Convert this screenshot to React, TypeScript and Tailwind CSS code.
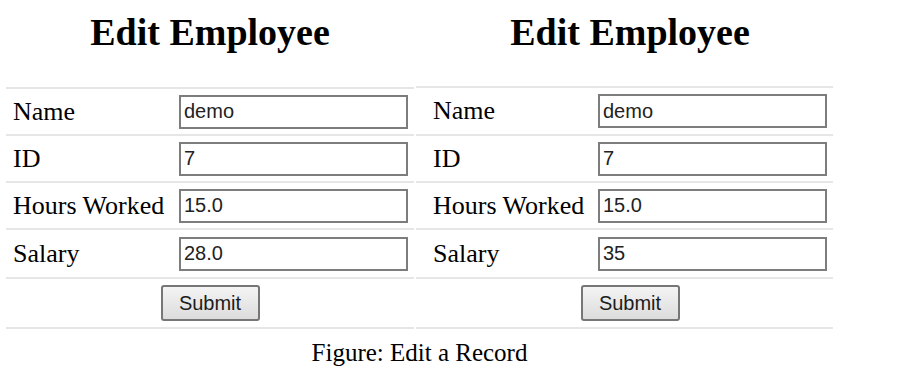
const serif = "font-['Liberation_Serif','Times_New_Roman',serif]";
const sans = "font-['Liberation_Sans',Arial,sans-serif]";

type Row = { label: string; value: string; h: string };

const EmployeeForm = ({
    rows,
    width,
    labelWidth,
    labelPad,
    shift,
    titleHeight,
}: {
    rows: Row[];
    width: string;
    labelWidth: string;
    labelPad: string;
    shift: string;
    titleHeight: string;
}) => {
    return (
        <div className={`${width} shrink-0`}>
            <div className={`${titleHeight} pt-[12px] ${shift}`}>
                <h2 className={`${serif} text-center text-[38px] leading-[40px] font-bold text-black`}>
                    Edit Employee
                </h2>
            </div>
            <div className="border-t-2 border-[#e6e6e6]">
                {rows.map((row) => (
                    <div
                        key={row.label}
                        className={`flex items-center ${row.h} border-b-2 border-[#e6e6e6]`}
                    >
                        <span
                            className={`${labelWidth} ${labelPad} ${serif} text-[26px] leading-[30px] text-black whitespace-nowrap`}
                        >
                            {row.label}
                        </span>
                        <input
                            type="text"
                            defaultValue={row.value}
                            className={`w-[229px] h-[34px] border-2 border-[#7d7d7d] bg-white pl-[3px] ${sans} text-[20px] text-[#222] outline-none`}
                        />
                    </div>
                ))}
                <div className={`flex h-[50px] items-center justify-center border-b-2 border-[#e6e6e6] ${shift}`}>
                    <button
                        type="button"
                        className={`w-[99px] h-[36px] rounded-[3px] border-2 border-[#767676] bg-gradient-to-b from-[#f4f4f4] to-[#dcdcdc] ${sans} text-[20px] text-[#1c1c1c]`}
                    >
                        Submit
                    </button>
                </div>
            </div>
        </div>
    );
};

const App = () => {
    return (
        <div className="w-[898px] h-[384px] bg-white pl-[6px]">
            <div className="flex w-[827px] gap-[2px]">
                <EmployeeForm
                    width="w-[408px]"
                    labelWidth="w-[173px]"
                    labelPad="pl-[7px]"
                    shift=""
                    titleHeight="h-[87px]"
                    rows={[
                        { label: "Name", value: "demo", h: "h-[47px]" },
                        { label: "ID", value: "7", h: "h-[47px]" },
                        { label: "Hours Worked", value: "15.0", h: "h-[47px]" },
                        { label: "Salary", value: "28.0", h: "h-[49px]" },
                    ]}
                />
                <EmployeeForm
                    width="w-[417px]"
                    labelWidth="w-[182px]"
                    labelPad="pl-[17px]"
                    shift="pl-[11px]"
                    titleHeight="h-[86px]"
                    rows={[
                        { label: "Name", value: "demo", h: "h-[48px]" },
                        { label: "ID", value: "7", h: "h-[47px]" },
                        { label: "Hours Worked", value: "15.0", h: "h-[47px]" },
                        { label: "Salary", value: "35", h: "h-[49px]" },
                    ]}
                />
            </div>
            <p className={`w-[827px] mt-[9px] text-center ${serif} text-[25px] leading-[30px] text-black`}>
                Figure: Edit a Record
            </p>
        </div>
    );
};

export default App;
